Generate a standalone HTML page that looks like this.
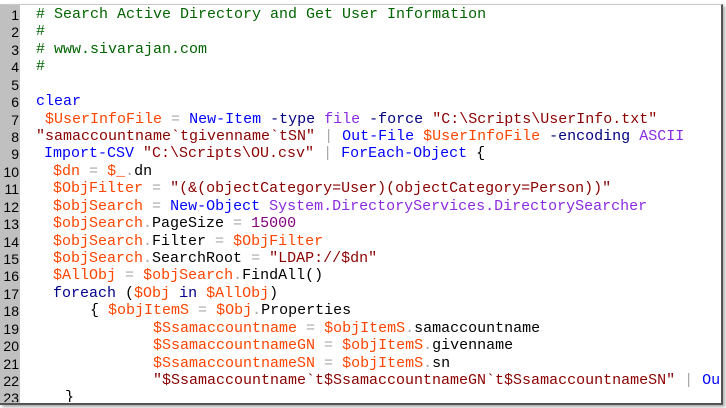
<!DOCTYPE html>
<html><head><meta charset="utf-8"><style>
html,body{margin:0;padding:0;width:726px;height:408px;overflow:hidden;background:#fff}
.box{position:absolute;left:0;top:4px;width:721px;height:398px;border-top:1px solid #c8c8c8;border-right:2px solid #555;border-bottom:2px solid #555;background:#fff;box-shadow:2px 2px 3px #aaa}
.gut{position:absolute;left:0;top:0;width:20px;height:398px;background:#c0c0c0}
.l{position:absolute;left:0;height:18px;line-height:18px;font-family:"Liberation Mono",monospace;font-size:15px;white-space:pre;color:#000}
.n{position:absolute;left:0;width:19px;text-align:right;font-family:"Liberation Sans",sans-serif;font-size:14px;color:#000;height:18px;line-height:18px}
.c{color:#006400}.k{color:#00008b}.v{color:#ff4500}.s{color:#8b0000}.m{color:#0000ff}.p{color:#8a2be2}.o{color:#a9a9a9}.a{color:#000080}.d{color:#800080}
</style></head><body>
<div class="box">
<div class="gut"></div>
</div>
<div style="position:absolute;left:0;top:5px">
<div class="n" style="top:1px">1</div><div class="l" style="top:1px;left:36px"><span class="c"># Search Active Directory and Get User Information</span></div>
<div class="n" style="top:18px">2</div><div class="l" style="top:18px;left:36px"><span class="c">#</span></div>
<div class="n" style="top:36px">3</div><div class="l" style="top:36px;left:36px"><span class="c"># www.sivarajan.com</span></div>
<div class="n" style="top:53px">4</div><div class="l" style="top:53px;left:36px"><span class="c">#</span></div>
<div class="n" style="top:71px">5</div>
<div class="n" style="top:88px">6</div><div class="l" style="top:88px;left:36px"><span class="m">clear</span></div>
<div class="n" style="top:106px">7</div><div class="l" style="top:106px;left:45px"><span class="v">$UserInfoFile</span> <span class="o">=</span> <span class="m">New-Item</span> <span class="a">-type</span> <span class="p">file</span> <span class="a">-force</span> <span class="s">"C:\Scripts\UserInfo.txt"</span></div>
<div class="n" style="top:123px">8</div><div class="l" style="top:123px;left:36px"><span class="s">"samaccountname`tgivenname`tSN"</span> <span class="o">|</span> <span class="m">Out-File</span> <span class="v">$UserInfoFile</span> <span class="a">-encoding</span> <span class="p">ASCII</span></div>
<div class="n" style="top:140px">9</div><div class="l" style="top:140px;left:44px"><span class="m">Import-CSV</span> <span class="s">"C:\Scripts\OU.csv"</span> <span class="o">|</span> <span class="m">ForEach-Object</span> {</div>
<div class="n" style="top:158px">10</div><div class="l" style="top:158px;left:53px"><span class="v">$dn</span> <span class="o">=</span> <span class="v">$_</span><span class="o">.</span>dn</div>
<div class="n" style="top:175px">11</div><div class="l" style="top:175px;left:53px"><span class="v">$ObjFilter</span> <span class="o">=</span> <span class="s">"(&amp;(objectCategory=User)(objectCategory=Person))"</span></div>
<div class="n" style="top:193px">12</div><div class="l" style="top:193px;left:53px"><span class="v">$objSearch</span> <span class="o">=</span> <span class="m">New-Object</span> <span class="p">System.DirectoryServices.DirectorySearcher</span></div>
<div class="n" style="top:210px">13</div><div class="l" style="top:210px;left:53px"><span class="v">$objSearch</span><span class="o">.</span>PageSize <span class="o">=</span> <span class="d">15000</span></div>
<div class="n" style="top:228px">14</div><div class="l" style="top:228px;left:53px"><span class="v">$objSearch</span><span class="o">.</span>Filter <span class="o">=</span> <span class="v">$ObjFilter</span></div>
<div class="n" style="top:245px">15</div><div class="l" style="top:245px;left:53px"><span class="v">$objSearch</span><span class="o">.</span>SearchRoot <span class="o">=</span> <span class="s">"LDAP://$dn"</span></div>
<div class="n" style="top:262px">16</div><div class="l" style="top:262px;left:53px"><span class="v">$AllObj</span> <span class="o">=</span> <span class="v">$objSearch</span><span class="o">.</span>FindAll()</div>
<div class="n" style="top:280px">17</div><div class="l" style="top:280px;left:53px"><span class="k">foreach</span> (<span class="v">$Obj</span> <span class="k">in</span> <span class="v">$AllObj</span>)</div>
<div class="n" style="top:297px">18</div><div class="l" style="top:297px;left:90px">{ <span class="v">$objItemS</span> <span class="o">=</span> <span class="v">$Obj</span><span class="o">.</span>Properties</div>
<div class="n" style="top:315px">19</div><div class="l" style="top:315px;left:153px"><span class="v">$Ssamaccountname</span> <span class="o">=</span> <span class="v">$objItemS</span><span class="o">.</span>samaccountname</div>
<div class="n" style="top:332px">20</div><div class="l" style="top:332px;left:153px"><span class="v">$SsamaccountnameGN</span> <span class="o">=</span> <span class="v">$objItemS</span><span class="o">.</span>givenname</div>
<div class="n" style="top:350px">21</div><div class="l" style="top:350px;left:153px"><span class="v">$SsamaccountnameSN</span> <span class="o">=</span> <span class="v">$objItemS</span><span class="o">.</span>sn</div>
<div class="n" style="top:367px">22</div><div class="l" style="top:367px;left:153px;width:567px;overflow:hidden"><span class="s">"$Ssamaccountname`t$SsamaccountnameGN`t$SsamaccountnameSN"</span> <span class="o">|</span> <span class="m">Out-File</span></div>
<div class="n" style="top:384px;height:13px;overflow:hidden">23</div><div class="l" style="top:384px;left:65px;height:13px;overflow:hidden">}</div>
</div>
</body></html>
